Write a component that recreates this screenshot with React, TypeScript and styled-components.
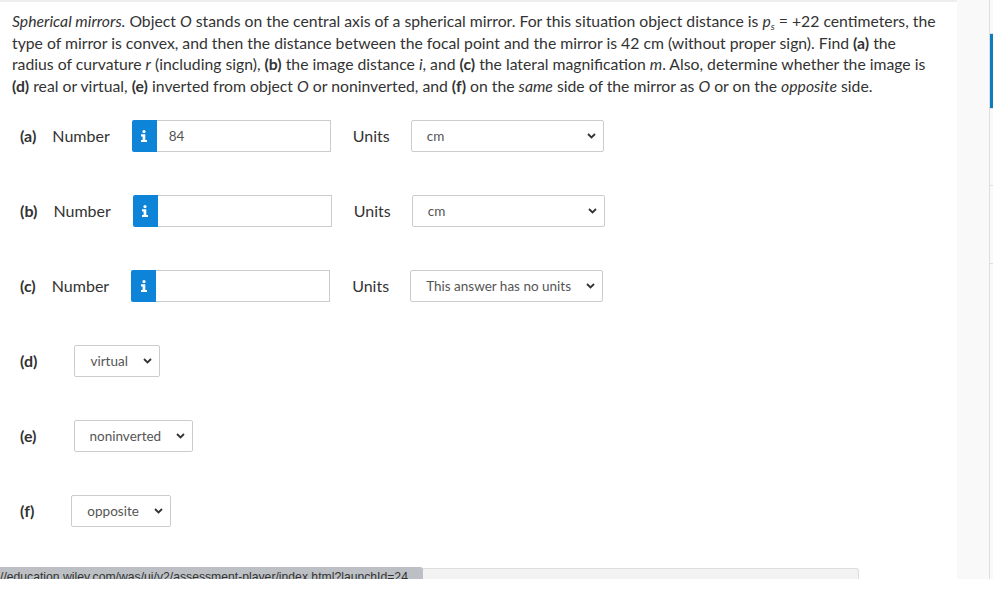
import React from "react";
import styled, { createGlobalStyle } from "styled-components";

const Global = createGlobalStyle`
  html, body { margin: 0; padding: 0; background: #ffffff; overflow: hidden; }
  body { font-family: Lato, "Open Sans", sans-serif; color: #333; }
`;

const Frame = styled.div`
  display: flex;
  width: 993px;
  height: 579px;
`;

const Main = styled.div`
  position: relative;
  flex: 0 0 957px;
  min-width: 0;
  overflow: hidden;
  display: flex;
  flex-direction: column;
  border-top: 2px solid #eeeeee;
  box-sizing: border-box;
`;

const Side = styled.div`
  flex: 1;
  display: flex;
  justify-content: flex-end;
  background: #f9f9f9;
`;

const Rail = styled.div`
  width: 4px;
  border-left: 1px solid #dedede;
  display: flex;
  flex-direction: column;
  padding-top: 33px;
  box-sizing: border-box;
`;

const RailItem = styled.div<{ $h: number; $active?: boolean }>`
  height: ${(p) => p.$h}px;
  border-top: 1px solid #dedede;
  background: ${(p) => (p.$active ? "#0b7dbd" : "transparent")};
  box-sizing: border-box;
`;

const Question = styled.p`
  margin: 0;
  padding: 8px 12px 0 12px;
  font-size: 15.75px;
  line-height: 21.7px;
  color: #333;
  white-space: nowrap;
`;

const Sub = styled.sub`
  font-size: 10px;
  vertical-align: -3px;
  line-height: 0;
`;

const Rows = styled.div`
  display: flex;
  flex-direction: column;
  gap: 43px;
  padding: 23px 0 0 20px;
`;

const Row = styled.div`
  display: flex;
  align-items: center;
  height: 32px;
`;

const PartLabel = styled.span<{ $gap: number }>`
  font-size: 16px;
  font-weight: 700;
  color: #333;
  margin-right: ${(p) => p.$gap}px;
`;

const FieldLabel = styled.span<{ $gap: number }>`
  font-size: 16px;
  color: #333;
  margin-right: ${(p) => p.$gap}px;
`;

const InfoButton = styled.div`
  width: 25px;
  height: 32px;
  background: #0e84d8;
  border-radius: 2px 0 0 2px;
  display: flex;
  align-items: center;
  justify-content: center;
`;

const Input = styled.div`
  width: 174px;
  height: 32px;
  box-sizing: border-box;
  border: 1px solid #cccccc;
  border-left: none;
  display: flex;
  align-items: center;
  padding-left: 12px;
  font-size: 13.5px;
  color: #555;
  margin-right: 22px;
`;

const Select = styled.div<{ $width?: number }>`
  ${(p) => (p.$width ? `width: ${p.$width}px;` : "")}
  height: 32px;
  box-sizing: border-box;
  border: 1px solid #cccccc;
  border-radius: 2px;
  display: flex;
  align-items: center;
  justify-content: space-between;
  gap: 15px;
  padding: 0 7px 0 15px;
  font-size: 13.5px;
  color: #555;
`;

const Footer = styled.div`
  margin-top: auto;
  width: 859px;
  height: 11px;
  box-sizing: border-box;
  background: #f3f3f3;
  border-top: 1px solid #dddddd;
  border-right: 1px solid #dddddd;
  border-top-right-radius: 3px;
`;

const StatusTip = styled.div`
  position: absolute;
  left: 0;
  bottom: 0;
  width: 423px;
  height: 12px;
  overflow: hidden;
  background: #bcc0c4;
  border-top-right-radius: 3px;
  font-family: "Liberation Sans", Arial, sans-serif;
  font-size: 12.2px;
  line-height: 14px;
  color: #333;
  padding: 3px 0 0 0;
  box-sizing: border-box;
  white-space: nowrap;
`;

const InfoIcon = () => (
  <svg width="8" height="12" viewBox="0 0 8 12">
    <circle cx="4" cy="1.6" r="1.6" fill="#fff" />
    <path d="M1 4.3h4.3v5.6H7V12H1V9.9h1.6V6.4H1z" fill="#fff" />
  </svg>
);

const Chevron = () => (
  <svg width="9" height="6" viewBox="0 0 9 6">
    <path d="M1 1l3.5 3.5L8 1" stroke="#333" strokeWidth="1.8" fill="none" />
  </svg>
);

const NumberRow = ({ part, value, unit }: { part: string; value: string; unit: string }) => (
  <Row>
    <PartLabel $gap={16}>{part}</PartLabel>
    <FieldLabel $gap={22}>Number</FieldLabel>
    <InfoButton>
      <InfoIcon />
    </InfoButton>
    <Input>{value}</Input>
    <FieldLabel $gap={21}>Units</FieldLabel>
    <Select $width={193}>
      <span>{unit}</span>
      <Chevron />
    </Select>
  </Row>
);

const ChoiceRow = ({ part, value }: { part: string; value: string }) => (
  <Row>
    <PartLabel $gap={37}>{part}</PartLabel>
    <Select>
      <span>{value}</span>
      <Chevron />
    </Select>
  </Row>
);

export default function App() {
  return (
    <>
      <Global />
      <Frame>
        <Main>
          <Question>
            <i>Spherical mirrors.</i> Object <i>O</i> stands on the central axis of a spherical mirror. For this situation object distance is <i>p</i>
            <Sub>
              <i>s</i>
            </Sub>{" "}
            = +22 centimeters, the
            <br />
            type of mirror is convex, and then the distance between the focal point and the mirror is 42 cm (without proper sign). Find <b>(a)</b> the
            <br />
            radius of curvature <i>r</i> (including sign), <b>(b)</b> the image distance <i>i</i>, and <b>(c)</b> the lateral magnification <i>m</i>. Also, determine whether the image is
            <br />
            <b>(d)</b> real or virtual, <b>(e)</b> inverted from object <i>O</i> or noninverted, and <b>(f)</b> on the <i>same</i> side of the mirror as <i>O</i> or on the <i>opposite</i> side.
          </Question>
          <Rows>
            <NumberRow part="(a)" value="84" unit="cm" />
            <NumberRow part="(b)" value="" unit="cm" />
            <NumberRow part="(c)" value="" unit="This answer has no units" />
            <ChoiceRow part="(d)" value="virtual" />
            <ChoiceRow part="(e)" value="noninverted" />
            <ChoiceRow part="(f)" value="opposite" />
          </Rows>
          <Footer />
          <StatusTip>//education.wiley.com/was/ui/v2/assessment-player/index.html?launchId=24</StatusTip>
        </Main>
        <Side>
          <Rail>
            <RailItem $h={75} $active />
            <RailItem $h={77} />
            <RailItem $h={78} />
            <RailItem $h={77} />
          </Rail>
        </Side>
      </Frame>
    </>
  );
}
